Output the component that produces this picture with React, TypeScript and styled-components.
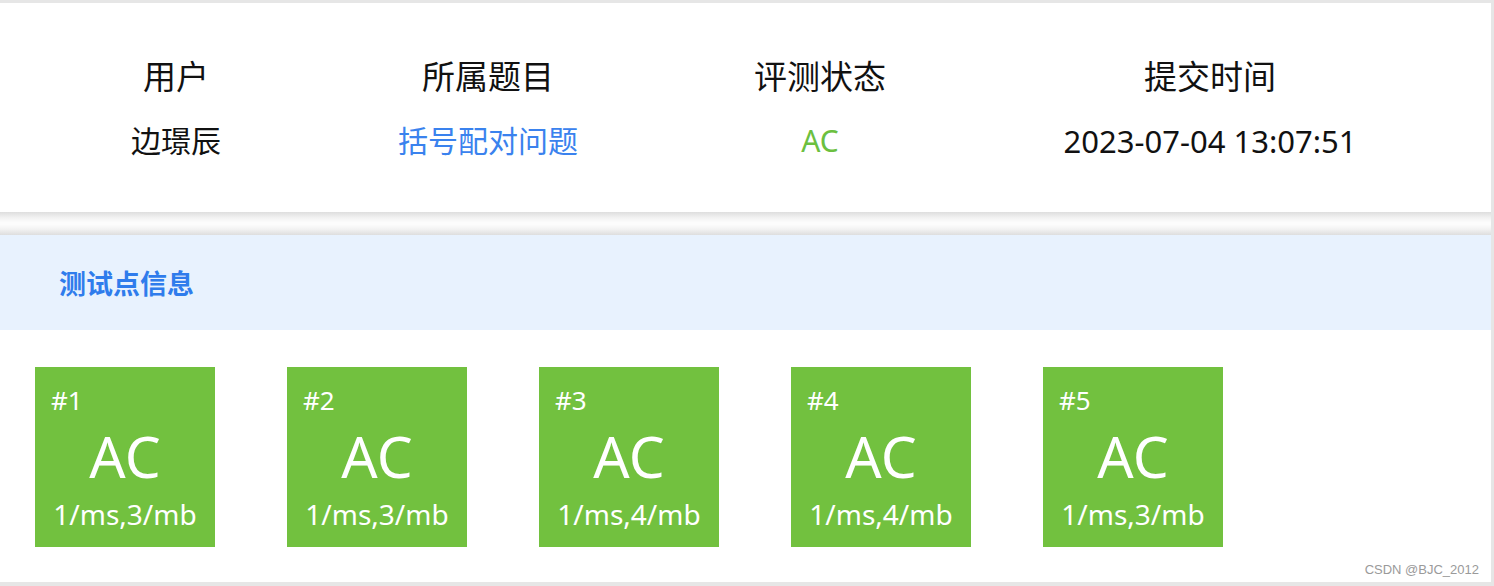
import React from "react";
import styled, { createGlobalStyle } from "styled-components";

const Global = createGlobalStyle`
  html, body { margin: 0; padding: 0; background: #e6e6e6; }
  body { font-family: "Noto Sans", "Noto Sans CJK SC", sans-serif; }
`;

const Page = styled.div`
  position: relative;
  width: 1494px;
  height: 586px;
  padding: 3px 3px 4px 0;
  box-sizing: border-box;
  display: flex;
  flex-direction: column;
  background: #e6e6e6;
  overflow: hidden;
`;

const Card = styled.section<{ $h: number }>`
  background: #fff;
  height: ${(p) => p.$h}px;
  flex: none;
  display: flex;
  flex-direction: column;
`;

const Divider = styled.div`
  height: 23px;
  flex: none;
  background: linear-gradient(
    #dedede 0%,
    #f2f2f2 25%,
    #fcfcfc 45%,
    #fcfcfc 55%,
    #f2f2f2 75%,
    #dedede 100%
  );
`;

const InfoGrid = styled.div`
  display: grid;
  grid-template-columns: 352px 272px 392px 388px;
  grid-template-rows: 64px 64px;
  padding-top: 42px;
  text-align: center;
  align-items: center;
`;

const Head = styled.div`
  font-size: 33px;
  color: #111;
  line-height: 64px;
`;

const Value = styled.div<{ $color?: string }>`
  font-size: 30px;
  color: ${(p) => p.$color || "#111"};
  line-height: 64px;
`;

const Time = styled(Value)`
  font-size: 31px;
`;

const Banner = styled.div`
  height: 95px;
  background: #e8f2fe;
  display: flex;
  align-items: center;
  padding-left: 59px;
  font-size: 27px;
  font-weight: 700;
  color: #2f7cec;
`;

const Tiles = styled.div`
  display: flex;
  gap: 72px;
  padding: 37px 0 0 35px;
`;

const Tile = styled.div`
  width: 180px;
  height: 180px;
  background: #72c13f;
  color: #fff;
  display: flex;
  flex-direction: column;
  box-sizing: border-box;
  padding-top: 16px;
`;

const TileNo = styled.div`
  font-size: 26px;
  line-height: 34px;
  padding-left: 16px;
`;

const TileState = styled.div`
  font-size: 57px;
  line-height: 70px;
  text-align: center;
  margin-top: 4px;
`;

const TileStat = styled.div`
  font-size: 28px;
  line-height: 40px;
  text-align: center;
  margin-top: 3px;
`;

const Watermark = styled.div`
  position: absolute;
  right: 15px;
  bottom: 9px;
  font-family: "Liberation Sans", Arial, sans-serif;
  font-size: 13px;
  color: #9a9a9a;
`;

const cases = [
  { n: 1, stat: "1/ms,3/mb" },
  { n: 2, stat: "1/ms,3/mb" },
  { n: 3, stat: "1/ms,4/mb" },
  { n: 4, stat: "1/ms,4/mb" },
  { n: 5, stat: "1/ms,3/mb" },
];

export default function App() {
  return (
    <>
      <Global />
      <Page>
        <Card $h={209}>
          <InfoGrid>
            <Head>用户</Head>
            <Head>所属题目</Head>
            <Head>评测状态</Head>
            <Head>提交时间</Head>
            <Value>边璟辰</Value>
            <Value $color="#3a82ee">括号配对问题</Value>
            <Value $color="#6cc03f">AC</Value>
            <Time>2023-07-04 13:07:51</Time>
          </InfoGrid>
        </Card>
        <Divider />
        <Card $h={347}>
          <Banner>测试点信息</Banner>
          <Tiles>
            {cases.map((c) => (
              <Tile key={c.n}>
                <TileNo>#{c.n}</TileNo>
                <TileState>AC</TileState>
                <TileStat>{c.stat}</TileStat>
              </Tile>
            ))}
          </Tiles>
        </Card>
        <Watermark>CSDN @BJC_2012</Watermark>
      </Page>
    </>
  );
}
